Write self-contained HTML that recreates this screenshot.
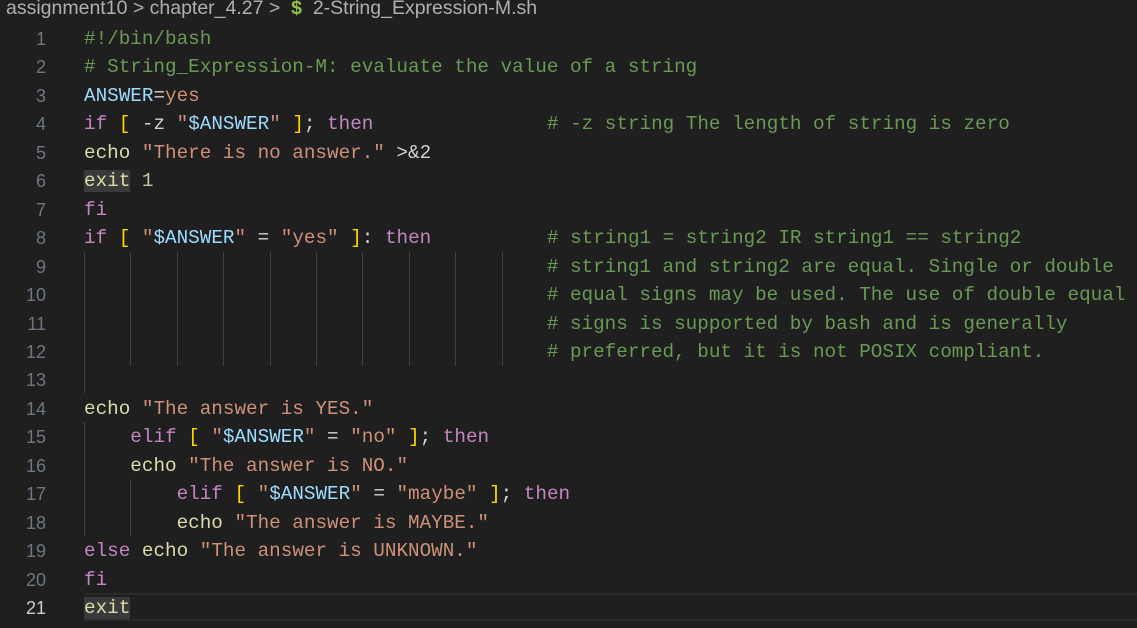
<!DOCTYPE html><html><head><meta charset="utf-8"><style>
body{margin:0;width:1137px;height:628px;background:#1f1f1f;overflow:hidden;position:relative;font-family:"Liberation Mono",monospace}
.bc{position:absolute;left:6px;top:-3px;font:19.5px "Liberation Sans",sans-serif;color:#b0b0b0;white-space:pre}
.ln{position:absolute;left:0;width:46px;text-align:right;color:#6e7681;font-size:18px;font-family:"Liberation Sans",sans-serif;line-height:28px}
.c{position:absolute;left:84px;white-space:pre;font-size:19.3px;color:#d4d4d4}
.cm{color:#6a9955}.k{color:#c586c0}.s{color:#ce9178}.v{color:#9cdcfe}.f{color:#dcdcaa}.b{color:#ffd700}.n{color:#b5cea8}
.g{position:absolute;width:1px;background:#404040}
.hl{background:#3a3a3a}
</style></head><body>
<div class="bc">assignment10 &gt; chapter_4.27 &gt;  <span style="color:#8dc149;font-weight:bold">$</span>  2-String_Expression-M.sh</div>
<div style="position:absolute;left:84px;right:0;top:593px;height:28px;border-top:2px solid #2a2a2a;border-bottom:2px solid #2a2a2a;box-sizing:border-box"></div>
<div id="L"></div>
<script>
var lines=[
'<span class="cm">#!/bin/bash</span>',
'<span class="cm"># String_Expression-M: evaluate the value of a string</span>',
'<span class="v">ANSWER</span>=<span class="s">yes</span>',
'<span class="k">if</span> <span class="b">[</span> -z <span class="s">"</span><span class="v">$ANSWER</span><span class="s">"</span> <span class="b">]</span>; <span class="k">then</span>               <span class="cm"># -z string The length of string is zero</span>',
'<span class="f">echo</span> <span class="s">"There is no answer."</span> &gt;&amp;2',
'<span class="f hl">exit</span> <span class="n">1</span>',
'<span class="k">fi</span>',
'<span class="k">if</span> <span class="b">[</span> <span class="s">"</span><span class="v">$ANSWER</span><span class="s">"</span> = <span class="s">"yes"</span> <span class="b">]</span>: <span class="k">then</span>          <span class="cm"># string1 = string2 IR string1 == string2</span>',
'                                        <span class="cm"># string1 and string2 are equal. Single or double</span>',
'                                        <span class="cm"># equal signs may be used. The use of double equal</span>',
'                                        <span class="cm"># signs is supported by bash and is generally</span>',
'                                        <span class="cm"># preferred, but it is not POSIX compliant.</span>',
'',
'<span class="f">echo</span> <span class="s">"The answer is YES."</span>',
'    <span class="k">elif</span> <span class="b">[</span> <span class="s">"</span><span class="v">$ANSWER</span><span class="s">"</span> = <span class="s">"no"</span> <span class="b">]</span>; <span class="k">then</span>',
'    <span class="f">echo</span> <span class="s">"The answer is NO."</span>',
'        <span class="k">elif</span> <span class="b">[</span> <span class="s">"</span><span class="v">$ANSWER</span><span class="s">"</span> = <span class="s">"maybe"</span> <span class="b">]</span>; <span class="k">then</span>',
'        <span class="f">echo</span> <span class="s">"The answer is MAYBE."</span>',
'<span class="k">else</span> <span class="f">echo</span> <span class="s">"The answer is UNKNOWN."</span>',
'<span class="k">fi</span>',
'<span class="f hl">exit</span>'];
var h='',cw=11.6,lh=28.45;
for(var i=0;i<lines.length;i++){var yy=Math.round(38+i*lh-14);
h+='<div class="ln" style="top:'+(yy+1)+'px;'+(i==20?'color:#cccccc':'')+'">'+(i+1)+'</div>';
h+='<div class="c" style="top:'+(yy+1)+'px;line-height:28px">'+lines[i]+'</div>';}
function g(col,l1,l2){return '<div class="g" style="left:'+Math.round(84+col*cw)+'px;top:'+Math.round(38+(l1-1)*lh-14)+'px;height:'+Math.round((l2-l1+1)*lh)+'px"></div>';}
for(var c=0;c<40;c+=4)h+=g(c,9,12);
h+=g(0,13,13);h+=g(0,15,18);h+=g(4,17,18);
document.getElementById('L').innerHTML=h;
</script>
</body></html>
